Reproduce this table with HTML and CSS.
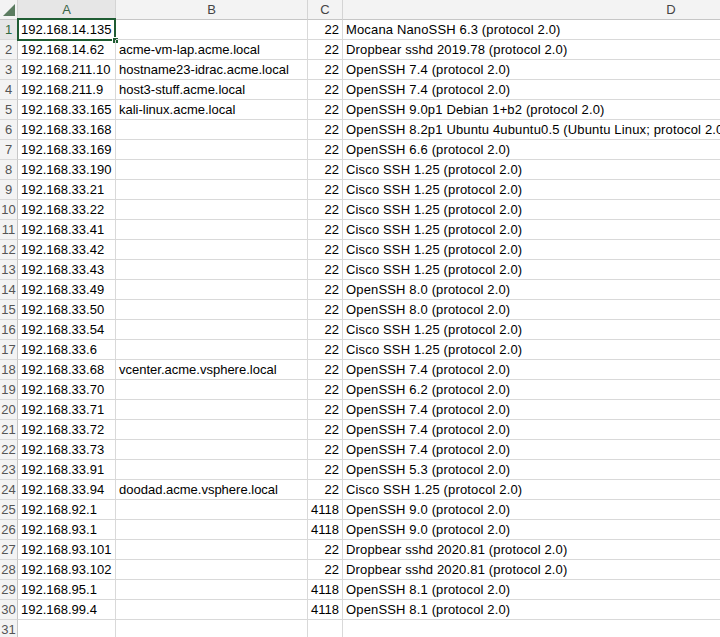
FILE: index.html
```html
<!DOCTYPE html>
<html>
<head>
<meta charset="utf-8">
<link rel="stylesheet" href="styles.css">
</head>
<body>
<div class="sheet">
  <div class="row head">
    <div class="corner"><span class="tri"></span></div>
    <div class="ch sel">A</div>
    <div class="ch">B</div>
    <div class="ch">C</div>
    <div class="ch">D</div>
  </div>
  <div class="row"><div class="rh sel">1</div><div class="c active">192.168.14.135<span class="frame"></span><span class="handle"></span></div><div class="c"></div><div class="c num">22</div><div class="c txt">Mocana NanoSSH 6.3 (protocol 2.0)</div></div>
  <div class="row"><div class="rh">2</div><div class="c">192.168.14.62</div><div class="c">acme-vm-lap.acme.local</div><div class="c num">22</div><div class="c txt">Dropbear sshd 2019.78 (protocol 2.0)</div></div>
  <div class="row"><div class="rh">3</div><div class="c">192.168.211.10</div><div class="c">hostname23-idrac.acme.local</div><div class="c num">22</div><div class="c txt">OpenSSH 7.4 (protocol 2.0)</div></div>
  <div class="row"><div class="rh">4</div><div class="c">192.168.211.9</div><div class="c">host3-stuff.acme.local</div><div class="c num">22</div><div class="c txt">OpenSSH 7.4 (protocol 2.0)</div></div>
  <div class="row"><div class="rh">5</div><div class="c">192.168.33.165</div><div class="c">kali-linux.acme.local</div><div class="c num">22</div><div class="c txt">OpenSSH 9.0p1 Debian 1+b2 (protocol 2.0)</div></div>
  <div class="row"><div class="rh">6</div><div class="c">192.168.33.168</div><div class="c"></div><div class="c num">22</div><div class="c txt">OpenSSH 8.2p1 Ubuntu 4ubuntu0.5 (Ubuntu Linux; protocol 2.0)</div></div>
  <div class="row"><div class="rh">7</div><div class="c">192.168.33.169</div><div class="c"></div><div class="c num">22</div><div class="c txt">OpenSSH 6.6 (protocol 2.0)</div></div>
  <div class="row"><div class="rh">8</div><div class="c">192.168.33.190</div><div class="c"></div><div class="c num">22</div><div class="c txt">Cisco SSH 1.25 (protocol 2.0)</div></div>
  <div class="row"><div class="rh">9</div><div class="c">192.168.33.21</div><div class="c"></div><div class="c num">22</div><div class="c txt">Cisco SSH 1.25 (protocol 2.0)</div></div>
  <div class="row"><div class="rh">10</div><div class="c">192.168.33.22</div><div class="c"></div><div class="c num">22</div><div class="c txt">Cisco SSH 1.25 (protocol 2.0)</div></div>
  <div class="row"><div class="rh">11</div><div class="c">192.168.33.41</div><div class="c"></div><div class="c num">22</div><div class="c txt">Cisco SSH 1.25 (protocol 2.0)</div></div>
  <div class="row"><div class="rh">12</div><div class="c">192.168.33.42</div><div class="c"></div><div class="c num">22</div><div class="c txt">Cisco SSH 1.25 (protocol 2.0)</div></div>
  <div class="row"><div class="rh">13</div><div class="c">192.168.33.43</div><div class="c"></div><div class="c num">22</div><div class="c txt">Cisco SSH 1.25 (protocol 2.0)</div></div>
  <div class="row"><div class="rh">14</div><div class="c">192.168.33.49</div><div class="c"></div><div class="c num">22</div><div class="c txt">OpenSSH 8.0 (protocol 2.0)</div></div>
  <div class="row"><div class="rh">15</div><div class="c">192.168.33.50</div><div class="c"></div><div class="c num">22</div><div class="c txt">OpenSSH 8.0 (protocol 2.0)</div></div>
  <div class="row"><div class="rh">16</div><div class="c">192.168.33.54</div><div class="c"></div><div class="c num">22</div><div class="c txt">Cisco SSH 1.25 (protocol 2.0)</div></div>
  <div class="row"><div class="rh">17</div><div class="c">192.168.33.6</div><div class="c"></div><div class="c num">22</div><div class="c txt">Cisco SSH 1.25 (protocol 2.0)</div></div>
  <div class="row"><div class="rh">18</div><div class="c">192.168.33.68</div><div class="c">vcenter.acme.vsphere.local</div><div class="c num">22</div><div class="c txt">OpenSSH 7.4 (protocol 2.0)</div></div>
  <div class="row"><div class="rh">19</div><div class="c">192.168.33.70</div><div class="c"></div><div class="c num">22</div><div class="c txt">OpenSSH 6.2 (protocol 2.0)</div></div>
  <div class="row"><div class="rh">20</div><div class="c">192.168.33.71</div><div class="c"></div><div class="c num">22</div><div class="c txt">OpenSSH 7.4 (protocol 2.0)</div></div>
  <div class="row"><div class="rh">21</div><div class="c">192.168.33.72</div><div class="c"></div><div class="c num">22</div><div class="c txt">OpenSSH 7.4 (protocol 2.0)</div></div>
  <div class="row"><div class="rh">22</div><div class="c">192.168.33.73</div><div class="c"></div><div class="c num">22</div><div class="c txt">OpenSSH 7.4 (protocol 2.0)</div></div>
  <div class="row"><div class="rh">23</div><div class="c">192.168.33.91</div><div class="c"></div><div class="c num">22</div><div class="c txt">OpenSSH 5.3 (protocol 2.0)</div></div>
  <div class="row"><div class="rh">24</div><div class="c">192.168.33.94</div><div class="c">doodad.acme.vsphere.local</div><div class="c num">22</div><div class="c txt">Cisco SSH 1.25 (protocol 2.0)</div></div>
  <div class="row"><div class="rh">25</div><div class="c">192.168.92.1</div><div class="c"></div><div class="c num">4118</div><div class="c txt">OpenSSH 9.0 (protocol 2.0)</div></div>
  <div class="row"><div class="rh">26</div><div class="c">192.168.93.1</div><div class="c"></div><div class="c num">4118</div><div class="c txt">OpenSSH 9.0 (protocol 2.0)</div></div>
  <div class="row"><div class="rh">27</div><div class="c">192.168.93.101</div><div class="c"></div><div class="c num">22</div><div class="c txt">Dropbear sshd 2020.81 (protocol 2.0)</div></div>
  <div class="row"><div class="rh">28</div><div class="c">192.168.93.102</div><div class="c"></div><div class="c num">22</div><div class="c txt">Dropbear sshd 2020.81 (protocol 2.0)</div></div>
  <div class="row"><div class="rh">29</div><div class="c">192.168.95.1</div><div class="c"></div><div class="c num">4118</div><div class="c txt">OpenSSH 8.1 (protocol 2.0)</div></div>
  <div class="row"><div class="rh">30</div><div class="c">192.168.99.4</div><div class="c"></div><div class="c num">4118</div><div class="c txt">OpenSSH 8.1 (protocol 2.0)</div></div>
  <div class="row"><div class="rh">31</div><div class="c"></div><div class="c"></div><div class="c num"></div><div class="c"></div></div>
</div>
</body>
</html>
```
FILE: styles.css
```css
html, body {
  margin: 0;
  padding: 0;
  background: #ffffff;
  overflow: hidden;
}
.sheet {
  width: 1000px;
  font-family: "Liberation Sans", Arial, sans-serif;
  font-size: 13px;
  color: #000;
}
.row {
  display: grid;
  grid-template-columns: 18px 98px 192px 35px 657px;
  height: 20px;
}
.row > div {
  box-sizing: border-box;
  border-right: 1px solid #d9d9d9;
  border-bottom: 1px solid #d9d9d9;
  height: 20px;
  line-height: 20px;
  white-space: nowrap;
  overflow: visible;
}
.c {
  padding-left: 3px;
  position: relative;
}
.txt {
  letter-spacing: 0.15px;
}
.num {
  text-align: right;
  padding-left: 0;
  padding-right: 3px;
}
.head > div {
  background: #f3f3f3;
  border-right: 1px solid #d4d4d4;
  border-bottom: 1px solid #c6c6c6;
}
.ch {
  text-align: center;
  color: #444;
  font-size: 13px;
}
.ch.sel {
  background: #e6e6e6;
  color: #3a6447;
}
.corner {
  position: relative;
}
.tri {
  position: absolute;
  right: 2px;
  bottom: 3px;
  width: 0;
  height: 0;
  border-left: 12px solid transparent;
  border-bottom: 12px solid #5b7c60;
}
.rh {
  background: #f3f3f3;
  color: #555;
  text-align: center;
  font-size: 13px;
  border-right: 1px solid #c6c6c6 !important;
}
.rh.sel {
  background: #e6e6e6;
  color: #2f6a40;
}
.frame {
  position: absolute;
  left: -1px;
  top: -2px;
  right: -1px;
  bottom: -2px;
  border: 2px solid #1f5c33;
  pointer-events: none;
}
.handle {
  position: absolute;
  right: -4px;
  bottom: -5px;
  width: 5px;
  height: 5px;
  background: #1f5c33;
  border: 1px solid #fff;
}
```
